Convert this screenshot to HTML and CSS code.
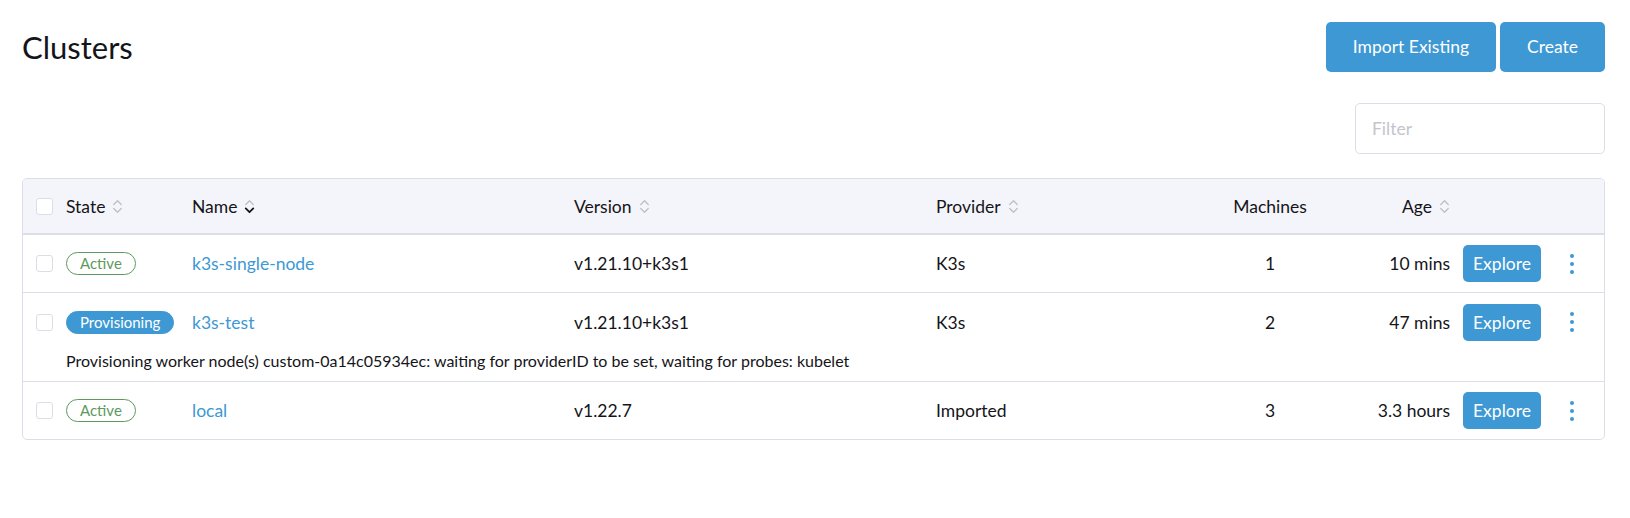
FILE: index.html
```html
<!DOCTYPE html>
<html>
<head>
<meta charset="utf-8">
<link rel="stylesheet" href="styles.css">
</head>
<body>
<div class="page">
  <header class="masthead">
    <h1 class="title">Clusters</h1>
    <div class="actions">
      <button class="btn">Import Existing</button>
      <button class="btn">Create</button>
    </div>
  </header>
  <div class="filter-row">
    <input class="filter" type="text" placeholder="Filter">
  </div>
  <div class="table">
    <div class="row thead">
      <div class="cell"><span class="check"></span></div>
      <div class="cell">State<svg class="sort" viewBox="0 0 10 14"><path d="M1.5 5.2 L5 1.7 L8.5 5.2" /><path d="M1.5 8.8 L5 12.3 L8.5 8.8" /></svg></div>
      <div class="cell">Name<svg class="sort" viewBox="0 0 10 14"><path d="M1.5 5.2 L5 1.7 L8.5 5.2" /><path class="on" d="M1.5 8.8 L5 12.3 L8.5 8.8" /></svg></div>
      <div class="cell">Version<svg class="sort" viewBox="0 0 10 14"><path d="M1.5 5.2 L5 1.7 L8.5 5.2" /><path d="M1.5 8.8 L5 12.3 L8.5 8.8" /></svg></div>
      <div class="cell">Provider<svg class="sort" viewBox="0 0 10 14"><path d="M1.5 5.2 L5 1.7 L8.5 5.2" /><path d="M1.5 8.8 L5 12.3 L8.5 8.8" /></svg></div>
      <div class="cell center">Machines</div>
      <div class="cell end">Age<svg class="sort" viewBox="0 0 10 14"><path d="M1.5 5.2 L5 1.7 L8.5 5.2" /><path d="M1.5 8.8 L5 12.3 L8.5 8.8" /></svg></div>
      <div class="cell"></div>
      <div class="cell"></div>
    </div>

    <div class="group">
      <div class="row">
        <div class="cell"><span class="check"></span></div>
        <div class="cell"><span class="badge active">Active</span></div>
        <div class="cell"><a class="link">k3s-single-node</a></div>
        <div class="cell">v1.21.10+k3s1</div>
        <div class="cell">K3s</div>
        <div class="cell center">1</div>
        <div class="cell end">10 mins</div>
        <div class="cell"><button class="btn-sm">Explore</button></div>
        <div class="cell"><span class="kebab"><i></i><i></i><i></i></span></div>
      </div>
    </div>

    <div class="group">
      <div class="row main">
        <div class="cell"><span class="check"></span></div>
        <div class="cell"><span class="badge info">Provisioning</span></div>
        <div class="cell"><a class="link">k3s-test</a></div>
        <div class="cell">v1.21.10+k3s1</div>
        <div class="cell">K3s</div>
        <div class="cell center">2</div>
        <div class="cell end">47 mins</div>
        <div class="cell"><button class="btn-sm">Explore</button></div>
        <div class="cell"><span class="kebab"><i></i><i></i><i></i></span></div>
      </div>
      <div class="sub">Provisioning worker node(s) custom-0a14c05934ec: waiting for providerID to be set, waiting for probes: kubelet</div>
    </div>

    <div class="group last">
      <div class="row">
        <div class="cell"><span class="check"></span></div>
        <div class="cell"><span class="badge active">Active</span></div>
        <div class="cell"><a class="link">local</a></div>
        <div class="cell">v1.22.7</div>
        <div class="cell">Imported</div>
        <div class="cell center">3</div>
        <div class="cell end">3.3 hours</div>
        <div class="cell"><button class="btn-sm">Explore</button></div>
        <div class="cell"><span class="kebab"><i></i><i></i><i></i></span></div>
      </div>
    </div>
  </div>
</div>
</body>
</html>
```

FILE: styles.css
```css
* { box-sizing: border-box; }

body {
  margin: 0;
  background: #ffffff;
  color: #141419;
  font-family: Lato, "Noto Sans", "Liberation Sans", sans-serif;
  font-size: 17.5px;
}

.page {
  padding: 22px 25px 0 22px;
}

.masthead {
  display: flex;
  align-items: center;
  justify-content: space-between;
  height: 50px;
}

.title {
  margin: 0;
  font-size: 31px;
  font-weight: 400;
  line-height: 36px;
  color: #141419;
}

.actions {
  display: flex;
  gap: 4px;
}

.btn {
  height: 50px;
  padding: 0 27px;
  border: 0;
  border-radius: 5px;
  background: #3d98d3;
  color: #ffffff;
  font-family: inherit;
  font-size: 17.5px;
  line-height: 50px;
}

.filter-row {
  display: flex;
  justify-content: flex-end;
  margin-top: 31px;
}

.filter {
  width: 250px;
  height: 51px;
  padding: 0 16px;
  border: 1px solid #dcdee7;
  border-radius: 5px;
  font-family: inherit;
  font-size: 17.5px;
  color: #141419;
  outline: none;
}

.filter::placeholder {
  color: #c4c4ce;
}

.table {
  margin-top: 24px;
  border: 1px solid #dcdee7;
  border-radius: 5px;
  overflow: hidden;
}

.row {
  display: grid;
  grid-template-columns: 43px 126px 382px 362px 254px 160px 100px 105px 49px;
  align-items: center;
  height: 57px;
}

.thead {
  height: 56px;
  background: #f4f5fa;
  border-bottom: 2px solid #dcdee7;
}

.group {
  border-bottom: 1px solid #dcdee7;
}

.group.last {
  border-bottom: 0;
}

.row.main {
  height: 58px;
}

.cell {
  display: flex;
  align-items: center;
  white-space: nowrap;
}

.cell.center {
  justify-content: center;
}

.cell.end {
  justify-content: flex-end;
}

.check {
  display: block;
  width: 17px;
  height: 17px;
  margin-left: 13px;
  background: #ffffff;
  border: 1px solid #dcdee7;
  border-radius: 3px;
}

.sort {
  width: 11px;
  height: 15px;
  margin-left: 7px;
  fill: none;
  stroke: #bfc0c8;
  stroke-width: 1.3;
  stroke-linecap: round;
  stroke-linejoin: round;
}

.sort .on {
  stroke: #141419;
  stroke-width: 1.7;
}

.badge {
  display: inline-block;
  height: 23px;
  padding: 0 13px;
  border: 1px solid;
  border-radius: 12px;
  font-size: 15px;
  line-height: 21px;
}

.badge.active {
  color: #5d995d;
  border-color: #5d995d;
  background: #ffffff;
}

.badge.info {
  color: #ffffff;
  border-color: #3d98d3;
  background: #3d98d3;
}

.link {
  color: #3d98d3;
  text-decoration: none;
}

.btn-sm {
  height: 37px;
  margin-left: 13px;
  padding: 0 10px;
  border: 0;
  border-radius: 5px;
  background: #3d98d3;
  color: #ffffff;
  font-family: inherit;
  font-size: 17.5px;
  line-height: 37px;
}

.kebab {
  display: flex;
  flex-direction: column;
  gap: 4px;
  margin-left: 15px;
}

.kebab i {
  display: block;
  width: 4px;
  height: 4px;
  border-radius: 50%;
  background: #3d98d3;
}

.sub {
  height: 30px;
  padding-left: 43px;
  font-size: 16px;
  line-height: 20px;
}
```
